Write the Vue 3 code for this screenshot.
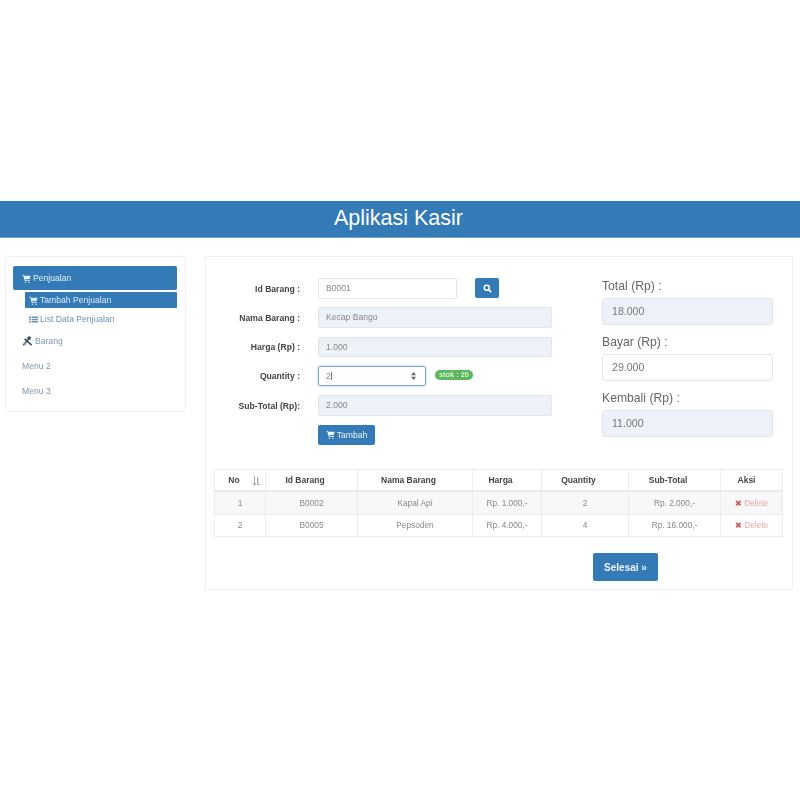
<script setup>
const fields = [
  { label: 'Id Barang :', value: 'B0001', kind: 'id' },
  { label: 'Nama Barang :', value: 'Kecap Bango', kind: 'ro' },
  { label: 'Harga (Rp) :', value: '1.000', kind: 'ro' },
  { label: 'Quantity :', value: '2', kind: 'qty' },
  { label: 'Sub-Total (Rp):', value: '2.000', kind: 'ro' },
]
const totals = [
  { label: 'Total (Rp) :', value: '18.000', ro: true },
  { label: 'Bayar (Rp) :', value: '29.000', ro: false },
  { label: 'Kembali (Rp) :', value: '11.000', ro: true },
]
const rows = [
  ['1', 'B0002', 'Kapal Api', 'Rp. 1.000,-', '2', 'Rp. 2.000,-'],
  ['2', 'B0005', 'Pepsoden', 'Rp. 4.000,-', '4', 'Rp. 16.000,-'],
]
const cart = 'M0 1h2.2l.5 1.5H12l-1.5 5H4l.3 1h6.7v1.2H3.3L1.4 2.2H0zM4.5 10.8a1.1 1.1 0 1 1 0 2.2 1.1 1.1 0 0 1 0-2.2zM9.5 10.8a1.1 1.1 0 1 1 0 2.2 1.1 1.1 0 0 1 0-2.2z'
</script>

<template>
  <div class="page">
    <header class="topbar">Aplikasi Kasir</header>
    <div class="content">
      <aside class="sidebar">
        <a class="nav-main">
          <svg class="ico" viewBox="0 0 12 13"><path :d="cart" /></svg>Penjualan
        </a>
        <a class="nav-sub active">
          <svg class="ico" viewBox="0 0 12 13"><path :d="cart" /></svg>Tambah Penjualan
        </a>
        <a class="nav-sub list">
          <svg class="ico" viewBox="0 0 12 12"><path d="M0 2h3v2H0zM4 2h8v2H4zM0 5h3v2H0zM4 5h8v2H4zM0 8h3v2H0zM4 8h8v2H4z" /></svg>List Data Penjualan
        </a>
        <a class="nav-item barang">
          <svg class="ico-dark" viewBox="0 0 13 12">
            <path d="M1.5 11 8 3M3 3.5 11.5 11" fill="none" stroke="#3d4f66" stroke-width="2" />
            <circle cx="8.5" cy="2.5" r="2.2" />
            <circle cx="3.5" cy="9" r="1.6" fill="#7f93aa" />
          </svg>Barang
        </a>
        <a class="nav-item">Menu 2</a>
        <a class="nav-item">Menu 3</a>
      </aside>

      <main class="panel">
        <div class="top">
          <div class="form">
            <div v-for="f in fields" :key="f.label" class="row">
              <label class="lbl">{{ f.label }}</label>
              <div v-if="f.kind === 'id'" class="ctl ctl-id">{{ f.value }}</div>
              <button v-if="f.kind === 'id'" class="btn btn-search">
                <svg viewBox="0 0 12 12" width="9" height="9"><circle cx="5" cy="5" r="3.4" fill="none" stroke="#fff" stroke-width="2" /><path d="M7.5 7.5 11 11" stroke="#fff" stroke-width="2.2" /></svg>
              </button>
              <div v-if="f.kind === 'ro'" class="ctl ctl-ro">{{ f.value }}</div>
              <template v-if="f.kind === 'qty'">
                <div class="ctl ctl-qty">
                  <span>{{ f.value }}<i class="caret"></i></span>
                  <svg viewBox="0 0 6 10" width="5" height="8"><path d="M3 0 6 4H0zM3 10 0 6h6z" fill="#666" /></svg>
                </div>
                <span class="badge">stok : 20</span>
              </template>
            </div>
            <div class="row">
              <span class="lbl"></span>
              <button class="btn btn-add">
                <svg class="ico" viewBox="0 0 12 13"><path :d="cart" /></svg>Tambah
              </button>
            </div>
          </div>
          <div class="totals">
            <div v-for="t in totals" :key="t.label" class="total">
              <label>{{ t.label }}</label>
              <div class="big" :class="{ 'ctl-ro': t.ro }">{{ t.value }}</div>
            </div>
          </div>
        </div>

        <table class="tbl">
          <colgroup>
            <col class="c1" /><col class="c2" /><col class="c3" /><col class="c4" />
            <col class="c5" /><col class="c6" /><col class="c7" />
          </colgroup>
          <thead>
            <tr>
              <th class="no">
                No
                <svg class="sort" viewBox="0 0 9 10" width="9" height="10"><path d="M2 0h1v7h1.4L2.5 10 .6 7H2zM5 1h1.2v7H8v1H5z" fill="#a9a9a9" /></svg>
              </th>
              <th>Id Barang</th><th>Nama Barang</th><th>Harga</th><th>Quantity</th><th>Sub-Total</th><th class="aksi">Aksi</th>
            </tr>
          </thead>
          <tbody>
            <tr v-for="r in rows" :key="r[0]">
              <td v-for="(c, i) in r" :key="i">{{ c }}</td>
              <td class="del"><b>✖</b> Delete</td>
            </tr>
          </tbody>
        </table>

        <button class="btn btn-done">Selesai »</button>
      </main>
    </div>
  </div>
</template>

<style>
body { margin: 0; background: #fff; }
</style>

<style scoped>
.page {
  padding-top: 201px;
  height: 599px;
  box-sizing: border-box;
  font-family: "Liberation Sans", Arial, sans-serif;
  font-size: 8.6px;
  color: #777;
  filter: blur(0.3px);
}
.topbar {
  height: 37px;
  box-sizing: border-box;
  background: #337ab7;
  border-bottom: 1px solid #6ea3cf;
  color: #fff;
  font-size: 21.5px;
  line-height: 34px;
  text-align: center;
  padding-right: 3px;
}
.content {
  display: flex;
  align-items: flex-start;
  gap: 19px;
  padding: 18px 7px 0 5px;
}
.sidebar {
  width: 182px;
  height: 156px;
  box-sizing: border-box;
  border: 1px solid #f0f0f0;
  border-radius: 4px;
  padding: 9px 8px 0 7px;
  display: flex;
  flex-direction: column;
}
.ico { width: 9px; height: 9px; margin-right: 2px; fill: currentColor; flex: none; }
.ico-dark { width: 11px; height: 10px; margin-right: 2px; fill: #3d4f66; flex: none; }
.nav-main, .nav-sub, .nav-item { display: flex; align-items: center; }
.nav-main {
  height: 24px;
  padding-left: 9px;
  background: #337ab7;
  color: #e8f1f8;
  border-radius: 2px;
}
.nav-sub {
  height: 16px;
  margin: 2px 0 0 12px;
  padding-left: 4px;
  color: #6f93b3;
  border-radius: 1px;
}
.nav-sub.list { margin-top: 3px; }
.nav-sub.active { background: #337ab7; color: #dce9f4; }
.nav-item { height: 25px; padding-left: 9px; color: #7d97ad; }
.barang { margin-top: 1px; }
.panel {
  flex: 1;
  height: 334px;
  box-sizing: border-box;
  border: 1px solid #f0f0f0;
  padding: 21px 9px 0 8px;
}
.top { display: flex; }
.form {
  width: 388px;
  display: flex;
  flex-direction: column;
  gap: 8.75px;
}
.row {
  display: grid;
  grid-template-columns: 86px auto auto 1fr;
  column-gap: 18px;
  align-items: center;
  justify-items: start;
  height: 20.5px;
}
.lbl {
  justify-self: end;
  font-weight: bold;
  color: #444;
  padding-top: 0.5px;
  white-space: nowrap;
}
.ctl {
  height: 20.5px;
  box-sizing: border-box;
  border: 1px solid #e2e5ea;
  border-radius: 2px;
  padding-left: 7px;
  line-height: 18.5px;
  color: #888;
}
.ctl-id { width: 139px; }
.ctl-ro { width: 234px; background: #edf2f9; grid-column: 2 / span 3; }
.ctl-qty {
  width: 108px;
  display: flex;
  justify-content: space-between;
  align-items: center;
  padding: 0 9px 0 7px;
  border-color: #7fa8d0;
  box-shadow: 0 0 3px rgba(102, 175, 233, .6);
}
.caret { display: inline-block; width: 1px; height: 8px; background: #777; vertical-align: -1px; }
.btn {
  border: 0;
  margin: 0;
  padding: 0;
  background: #337ab7;
  color: #eaf2f8;
  border-radius: 2px;
  font-family: inherit;
  display: flex;
  align-items: center;
  justify-content: center;
}
.btn-search { width: 24px; height: 20px; }
.badge {
  margin: -3px 0 0 -9px;
  background: #5cb85c;
  color: #d9f0d9;
  border-radius: 6px;
  font-size: 7.4px;
  font-weight: bold;
  line-height: 10px;
  padding: 0 4px;
  white-space: nowrap;
}
.btn-add { width: 57px; height: 20px; font-size: 8.6px; }
.totals { width: 171px; }
.total { margin-bottom: 9px; }
.total label {
  display: block;
  height: 20px;
  font-size: 12.2px;
  line-height: 16px;
  color: #666;
}
.big {
  height: 27px;
  box-sizing: border-box;
  width: 171px;
  border: 1px solid #e2e5ea;
  border-radius: 3px;
  padding-left: 9px;
  line-height: 25px;
  font-size: 10.6px;
  color: #777;
}
.tbl {
  margin-top: 23px;
  width: 568px;
  table-layout: fixed;
  border-collapse: collapse;
  text-align: center;
}
.c1 { width: 51px; }
.c2 { width: 92px; }
.c3 { width: 115px; }
.c4 { width: 69px; }
.c5 { width: 87px; }
.c6 { width: 92px; }
.c7 { width: 62px; }
.tbl th, .tbl td { border: 1px solid #ececec; }
.tbl th {
  height: 20px;
  padding: 0 13px 0 0;
  color: #444;
  font-size: 8.5px;
  border-bottom-width: 2px;
}
.tbl td { height: 21.5px; padding: 0; color: #888; font-size: 8.3px; }
.tbl tbody tr:first-child { background: #f8f8f8; }
.tbl th.no { position: relative; padding-right: 12px; }
.tbl th.aksi { padding-right: 10px; }
.sort { position: absolute; right: 4px; top: 6px; }
.del { color: #e6a6a6 !important; }
.del b { color: #c96a6a; font-size: 8px; }
.btn-done {
  margin: 16px 0 0 379px;
  width: 65px;
  height: 28px;
  font-size: 10px;
  font-weight: bold;
}
</style>
